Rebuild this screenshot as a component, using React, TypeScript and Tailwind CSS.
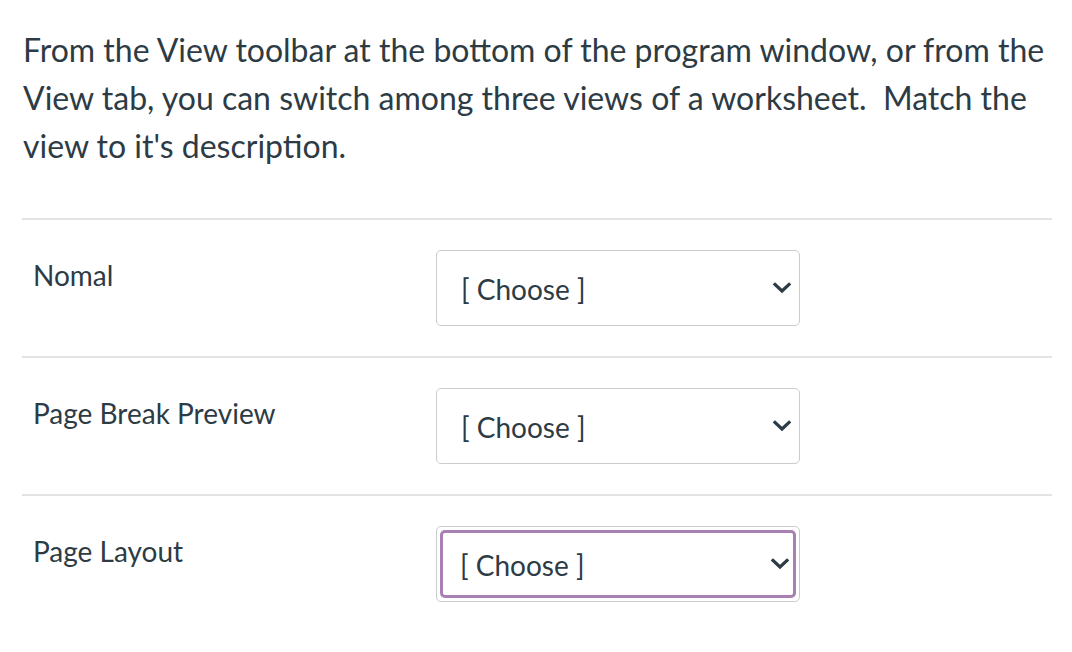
import React from "react";

const rows = [
  { label: "Nomal", focused: false },
  { label: "Page Break Preview", focused: false },
  { label: "Page Layout", focused: true },
];

const Chevron: React.FC = () => (
  <svg width="20" height="12" viewBox="0 0 20 12" className="shrink-0">
    <path
      d="M3 2.5 L10 9 L17 2.5"
      fill="none"
      stroke="#2d3b45"
      strokeWidth="3.2"
      strokeLinecap="square"
    />
  </svg>
);

const App: React.FC = () => {
  return (
    <div
      className="w-[1072px] h-[652px] bg-white text-[#2d3b45] px-[22px] pt-[26px]"
      style={{ fontFamily: "Lato, 'Open Sans', sans-serif" }}
    >
      <p className="text-[32px] leading-[48px] pl-[1px] w-[1048px]">
        From the View toolbar at the bottom of the program window, or from the
        View tab, you can switch among three views of a worksheet.&nbsp; Match
        the view to it's description.
      </p>

      <div className="mt-[48px] w-[1030px]">
        {rows.map((row) => (
          <div
            key={row.label}
            className="flex border-t-2 border-[#e3e3e3] h-[138px] pt-[30px]"
          >
            <div className="w-[414px] pl-[11px] pt-[9px] text-[28px] leading-[32px]">
              {row.label}
            </div>
            <div
              className={
                row.focused
                  ? "w-[364px] h-[76px] rounded-[5px] border border-[#c7cdd1] p-[3px]"
                  : "w-[364px] h-[76px] rounded-[5px] border border-[#c7cdd1]"
              }
            >
              <div
                className={
                  row.focused
                    ? "h-full flex items-center justify-between rounded-[5px] border-[3px] border-[#a97fb4] pl-[17px] pr-[3px]"
                    : "h-full flex items-center justify-between pl-[24px] pr-[7px]"
                }
              >
                <span className="text-[28px] leading-[32px] pt-[2px]">[ Choose ]</span>
                <Chevron />
              </div>
            </div>
          </div>
        ))}
      </div>
    </div>
  );
};

export default App;
